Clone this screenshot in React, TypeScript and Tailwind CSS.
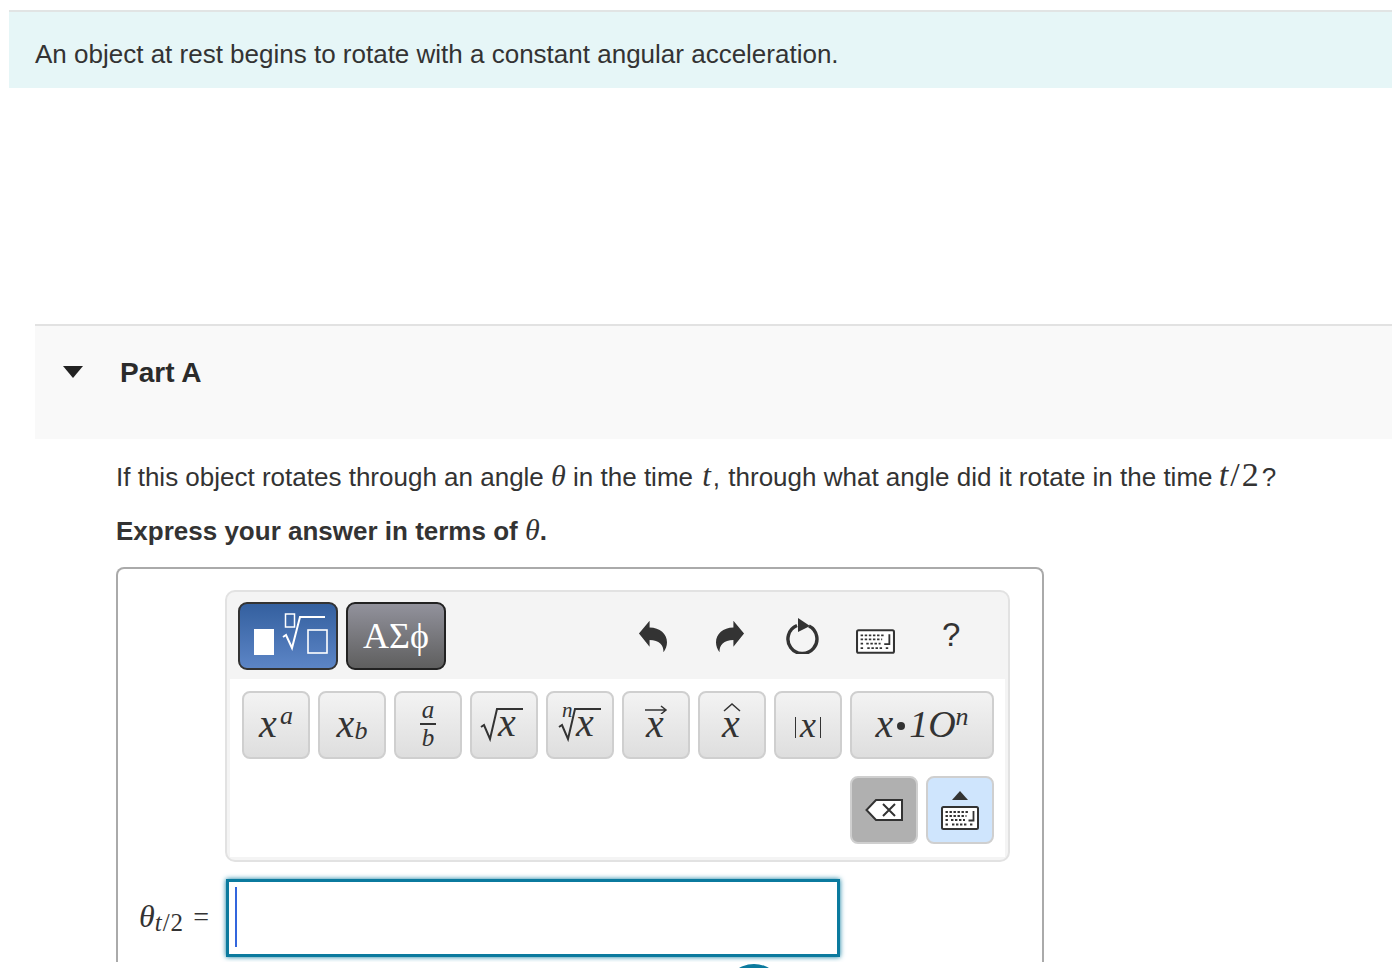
import React from 'react';

const serif = "font-['Liberation_Serif',serif]";

const KeyboardIcon: React.FC<{ className?: string }> = ({ className }) => (
  <svg viewBox="0 0 38 24" className={className} fill="none">
    <rect x="1" y="1" width="36" height="22" rx="1.5" fill="#fff" stroke="#333" strokeWidth="2" />
    <path d="M4.5 6h24M4.5 10h21M4.5 14h3M10 14h14M4.5 18.5h4M11 18.5h15M29 18.5h4" stroke="#333" strokeWidth="1.8" strokeDasharray="2.4 1.6" />
    <path d="M32.5 5v9.5h-5" stroke="#333" strokeWidth="1.8" />
  </svg>
);

const ArrowIcon: React.FC<{ className?: string }> = ({ className }) => (
  <svg viewBox="0 0 90 105" width="29" height="34" className={className}>
    <path d="M3 45L36 5v21c32 0 54 20 54 46 0 11-4 22-11 31 1-22-13-38-43-38v21z" fill="#333" />
  </svg>
);

const MathKey: React.FC<{ wide?: boolean; children: React.ReactNode }> = ({ wide, children }) => (
  <div
    className={`${wide ? 'w-[144px]' : 'w-[68px]'} h-[68px] shrink-0 rounded-[8px] border-2 border-[#cfcfcf] bg-gradient-to-b from-[#f3f3f3] to-[#dedede] flex items-center justify-center text-[#333] ${serif} italic`}
  >
    {children}
  </div>
);

const Radical: React.FC<{ width: number }> = ({ width }) => (
  <svg width={width} height="36" viewBox={`0 0 ${width} 36`} fill="none" className="absolute left-0 top-0">
    <path d={`M1 21l3-2 6 14L17 3h${width - 18}`} stroke="#333" strokeWidth="2" />
  </svg>
);

export default function App() {
  return (
    <div className="h-[968px] w-[1392px] overflow-hidden bg-white font-['Liberation_Sans',sans-serif] text-[#333]">
      <div className="h-[962px] overflow-hidden pt-[10px] pl-[9px]">
        <div className="h-[78px] border-t-2 border-[#e1e4e4] bg-[#e6f6f7] pl-[26px] pt-[24px] text-[26px] leading-[36px]">
          An object at rest begins to rotate with a constant angular acceleration.
        </div>

        <div className="mt-[236px] ml-[26px] h-[115px] border-t-2 border-[#e2e2e2] bg-[#f9f9f9] flex items-start">
          <div className="ml-[28px] mt-[40px] w-0 h-0 border-x-[10.5px] border-x-transparent border-t-[12px] border-t-[#222]" />
          <div className="ml-[37px] mt-[30px] text-[28px] leading-[34px] font-bold text-[#2b2b2b]">Part A</div>
        </div>

        <div className="pl-[107px]">
          <p className="mt-[19px] text-[26px] leading-[36px] whitespace-nowrap">
            If this object rotates through an angle{' '}
            <span className={`${serif} italic text-[30px] leading-none`}>θ</span> in the time{' '}
            <span className={`${serif} italic text-[31px] leading-none ml-[2px] mr-[2px]`}>t</span>
            <span className="mr-[1px]">,</span> through what angle did it rotate in the time{' '}
            <span className={`${serif} text-[34px] leading-none tracking-[2px] -ml-[1px] mr-[1px]`}>
              <i>t</i>/2
            </span>
            ?
          </p>
          <p className="mt-[18px] text-[26px] leading-[36px] font-bold whitespace-nowrap">
            Express your answer in terms of{' '}
            <span className={`${serif} italic font-normal text-[30px] leading-none`}>θ</span>.
          </p>

          <div className="mt-[18px] w-[928px] h-[420px] border-2 border-b-0 border-[#aaa] rounded-t-[8px] pl-[107px] pt-[21px]">
            <div className="w-[785px] h-[272px] border-2 border-[#e2e2e2] rounded-[10px] overflow-hidden bg-[#f4f4f4] flex flex-col">
              <div className="h-[87px] shrink-0 flex items-start pt-[10px] pl-[11px]">
                <div className="relative w-[100px] h-[68px] rounded-[9px] border-2 border-[#333] bg-gradient-to-b from-[#34609f] to-[#5c85c6]">
                  <div className="absolute left-[14px] top-[25px] w-[20px] h-[26px] bg-white" />
                  <svg width="60" height="56" viewBox="0 0 60 56" fill="none" className="absolute left-[42px] top-[9px]">
                    <rect x="3.5" y="1" width="9" height="13" stroke="#fff" strokeWidth="1.5" />
                    <path d="M1 24l3-2 6 13 8-31h25" stroke="#fff" strokeWidth="2" />
                    <rect x="26" y="17" width="19" height="23" stroke="#fff" strokeWidth="1.6" />
                  </svg>
                </div>
                <div className={`ml-[8px] w-[100px] h-[68px] rounded-[9px] border-2 border-[#222] bg-gradient-to-b from-[#92929c] to-[#5f5f5f] flex items-center justify-center text-white text-[36px] ${serif}`}>
                  ΑΣϕ
                </div>
                <ArrowIcon className="ml-[192px] mt-[17px]" />
                <ArrowIcon className="ml-[49px] mt-[17px] -scale-x-100" />
                <svg width="34" height="38" viewBox="0 0 34 38" fill="none" className="ml-[40px] mt-[14px]">
                  <path d="M12 9.5A14.5 14.5 0 1 0 24 10" stroke="#333" strokeWidth="3.4" />
                  <path d="M13 2l12 8-12 6z" fill="#333" />
                </svg>
                <KeyboardIcon className="ml-[37px] mt-[27px] w-[39px] h-[25px]" />
                <div className="ml-[47px] mt-[13px] text-[33px] leading-[40px] text-[#333]">?</div>
              </div>

              <div className="flex-1 mx-[3px] mb-[3px] bg-white">
                <div className="pl-[12px] pt-[12px] flex gap-[8px]">
                  <MathKey>
                    <span className="text-[40px] leading-none -mt-[3px]">x</span>
                    <span className="text-[26px] leading-none -mt-[18px] ml-[3px]">a</span>
                  </MathKey>
                  <MathKey>
                    <span className="text-[40px] leading-none -mt-[3px]">x</span>
                    <span className="text-[26px] leading-none mt-[12px]">b</span>
                  </MathKey>
                  <MathKey>
                    <div className="flex flex-col items-center text-[25px] leading-[25px] -mt-[3px]">
                      <span className="border-b-2 border-[#333] px-[2px] pb-[1px]">a</span>
                      <span>b</span>
                    </div>
                  </MathKey>
                  <MathKey>
                    <div className="relative w-[44px] h-[36px] -ml-[4px] -mt-[2px]">
                      <Radical width={44} />
                      <span className="absolute left-[18px] -top-[1px] text-[40px] leading-[36px]">x</span>
                    </div>
                  </MathKey>
                  <MathKey>
                    <div className="relative w-[44px] h-[36px] -mt-[2px]">
                      <Radical width={44} />
                      <span className="absolute left-[4px] -top-[6px] text-[21px] leading-none">n</span>
                      <span className="absolute left-[18px] -top-[1px] text-[40px] leading-[36px]">x</span>
                    </div>
                  </MathKey>
                  <MathKey>
                    <div className="relative w-[24px] h-[40px] -mt-[3px]">
                      <svg width="24" height="10" viewBox="0 0 24 10" fill="none" className="absolute left-0 top-0">
                        <path d="M1 6h21M17 2l5 4-5 4" stroke="#333" strokeWidth="1.5" />
                      </svg>
                      <span className="absolute left-[2px] top-[2px] text-[40px] leading-[36px]">x</span>
                    </div>
                  </MathKey>
                  <MathKey>
                    <div className="relative w-[24px] h-[40px] -mt-[3px]">
                      <svg width="20" height="10" viewBox="0 0 20 10" fill="none" className="absolute left-[2px] -top-[2px]">
                        <path d="M2 9l8-7 8 7" stroke="#333" strokeWidth="1.5" />
                      </svg>
                      <span className="absolute left-[2px] top-[2px] text-[40px] leading-[36px]">x</span>
                    </div>
                  </MathKey>
                  <MathKey>
                    <div className="w-[1.5px] h-[21px] bg-[#333] mt-[4px]" />
                    <span className="text-[36px] leading-none mx-[4px]">x</span>
                    <div className="w-[1.5px] h-[21px] bg-[#333] mt-[4px]" />
                  </MathKey>
                  <MathKey wide>
                    <span className="text-[40px] leading-none -mt-[3px]">x</span>
                    <div className="w-[8px] h-[8px] rounded-full bg-[#333] mx-[4px] mt-[2px]" />
                    <span className="text-[38px] leading-none -mt-[3px]">1O</span>
                    <span className="text-[26px] leading-none -mt-[16px]">n</span>
                  </MathKey>
                </div>

                <div className="pl-[620px] pt-[17px] flex gap-[8px]">
                  <div className="w-[68px] h-[68px] rounded-[8px] border-2 border-[#cfcfcf] bg-[#b0b0b0] flex items-center justify-center">
                    <svg width="38" height="22" viewBox="0 0 38 22" fill="none">
                      <path d="M11 1h26v20H11L1.5 11z" fill="#fff" stroke="#333" strokeWidth="2" />
                      <path d="M18 5l12 12M30 5L18 17" stroke="#333" strokeWidth="2" />
                    </svg>
                  </div>
                  <div className="w-[68px] h-[68px] rounded-[8px] border-2 border-[#cfcfcf] bg-[#cfe5fd] flex flex-col items-center justify-center">
                    <div className="w-0 h-0 border-x-[8px] border-x-transparent border-b-[9px] border-b-[#333]" />
                    <KeyboardIcon className="mt-[6px] w-[38px] h-[24px]" />
                  </div>
                </div>
              </div>
            </div>

            <div className="-ml-[87px] mt-[17px] flex items-center">
              <div className={`w-[88px] h-[78px] flex items-center ${serif} text-[#333]`}>
                <i className="text-[32px] ml-[1px] -mt-[4px]">θ</i>
                <span className="text-[25px] mt-[10px] tracking-[1px]">
                  <i>t</i>/2
                </span>
                <span className="ml-[9px] text-[28px] -mt-[2px]">=</span>
              </div>
              <div className="w-[614px] h-[78px] border-[3px] border-[#0b7a9e] shadow-[0_0_5px_#0b7a9e] bg-white pl-[6px] pt-[5px]">
                <div className="w-[2px] h-[60px] bg-[#3366dd]" />
              </div>
            </div>
          </div>
        </div>
      </div>
      <div className="h-[6px] overflow-hidden pt-[2px]">
        <div className="ml-[724px] w-[60px] h-[60px] rounded-full bg-[#0b7a9e]" />
      </div>
    </div>
  );
}
